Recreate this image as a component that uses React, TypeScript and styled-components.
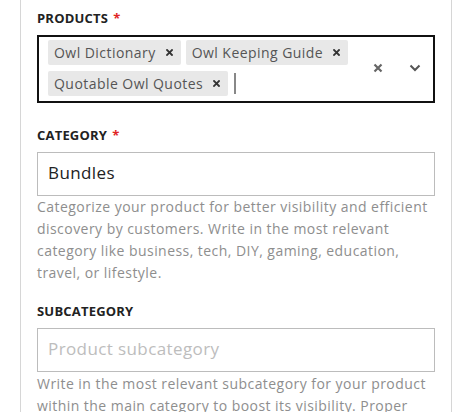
import { createGlobalStyle } from "styled-components";
import styled from "styled-components";

const GlobalStyle = createGlobalStyle`
  html, body { margin: 0; padding: 0; background: #fff; }
  body { font-family: "Open Sans", "Liberation Sans", sans-serif; overflow: hidden; }
`;

// styled components
const Page = styled.div`
  height: 412px;
  overflow: hidden;
  padding-left: 20px;
`;

const Card = styled.div`
  width: 398px;
  padding: 9px 16px 0;
  border-left: 1px solid #d6d6d6;
  border-right: 1px solid #d6d6d6;
  min-height: 420px;
`;

const Field = styled.div<{ $gap: number }>`
  margin-bottom: ${(p) => p.$gap}px;
`;

const Label = styled.div`
  font-size: 13px;
  font-weight: 700;
  line-height: 18px;
  color: #222;
  margin-bottom: 8px;
  letter-spacing: 0.2px;
`;

const Required = styled.span`
  color: #e02424;
  margin-left: 5px;
`;

const SelectBox = styled.div`
  display: flex;
  align-items: center;
  border: 2px solid #111;
  min-height: 64px;
`;

const Values = styled.div`
  flex: 1;
  display: flex;
  flex-wrap: wrap;
  align-content: flex-start;
  gap: 6px 5px;
  padding: 3px 9px 5px;
`;

const Chip = styled.div`
  display: flex;
  align-items: center;
  height: 25px;
  background: #e8e8e8;
  border-radius: 2px;
  padding: 0 8px 0 6px;
  font-size: 14px;
  letter-spacing: 0.45px;
  color: #555;
  gap: 10px;
`;

const Cursor = styled.div`
  width: 2px;
  height: 21px;
  margin: 2px 0 0 1px;
  background: #888;
`;

const Controls = styled.div`
  display: flex;
  align-items: center;
  gap: 26px;
  padding-right: 12px;
  margin-top: -2px;
`;

const TextInput = styled.div<{ $placeholder?: boolean }>`
  border: 1px solid #bcbcbc;
  display: flex;
  align-items: center;
  padding: 0 10px 3px;
  box-sizing: content-box;
  height: 39px;
  font-size: 17px;
  letter-spacing: 0.4px;
  color: ${(p) => (p.$placeholder ? "#bdbdbd" : "#222")};
`;

const Help = styled.div<{ $offset?: number }>`
  font-size: 14px;
  line-height: 22px;
  letter-spacing: 0.45px;
  color: #8e8e8e;
  white-space: nowrap;
  margin-top: ${(p) => p.$offset || 0}px;
`;

const SmallX = () => (
  <svg width="7" height="7" viewBox="0 0 7 7">
    <path d="M1 1L6 6M6 1L1 6" stroke="#333" strokeWidth="1.8" strokeLinecap="square" />
  </svg>
);

const ClearX = () => (
  <svg width="10" height="10" viewBox="0 0 10 10">
    <path d="M1.5 1.5L8.5 8.5M8.5 1.5L1.5 8.5" stroke="#666" strokeWidth="2.2" />
  </svg>
);

const Chevron = () => (
  <svg width="12" height="8" viewBox="0 0 12 8">
    <path d="M1.5 1.5L6 6L10.5 1.5" stroke="#555" strokeWidth="2" fill="none" />
  </svg>
);

const products = ["Owl Dictionary", "Owl Keeping Guide", "Quotable Owl Quotes"];

export default function App() {
  return (
    <Page>
      <GlobalStyle />
      <Card>
        <Field $gap={23}>
          <Label>
            PRODUCTS<Required>*</Required>
          </Label>
          <SelectBox>
            <Values>
              {products.map((name) => (
                <Chip key={name}>
                  {name}
                  <SmallX />
                </Chip>
              ))}
              <Cursor />
            </Values>
            <Controls>
              <ClearX />
              <Chevron />
            </Controls>
          </SelectBox>
        </Field>

        <Field $gap={18}>
          <Label>
            CATEGORY<Required>*</Required>
          </Label>
          <TextInput>Bundles</TextInput>
          <Help>
            Categorize your product for better visibility and efficient
            <br />
            discovery by customers. Write in the most relevant
            <br />
            category like business, tech, DIY, gaming, education,
            <br />
            travel, or lifestyle.
          </Help>
        </Field>

        <Field $gap={18}>
          <Label>SUBCATEGORY</Label>
          <TextInput $placeholder>Product subcategory</TextInput>
          <Help $offset={1}>
            Write in the most relevant subcategory for your product
            <br />
            within the main category to boost its visibility. Proper
          </Help>
        </Field>
      </Card>
    </Page>
  );
}
